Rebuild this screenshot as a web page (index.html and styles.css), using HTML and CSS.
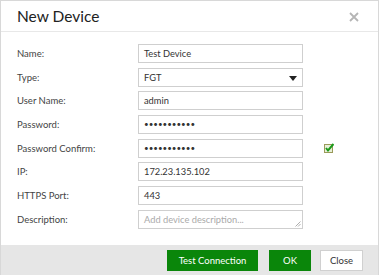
FILE: index.html
```html
<!DOCTYPE html>
<html>
<head>
<meta charset="utf-8">
<link rel="stylesheet" href="styles.css">
</head>
<body>
<div class="dialog">
  <div class="dialog-header">
    <span class="title">New Device</span>
    <svg class="close-x" width="10" height="10" viewBox="0 0 10 10">
      <path d="M1 1 L9 9 M9 1 L1 9" stroke="#b5b5b5" stroke-width="1.8"/>
    </svg>
  </div>
  <form class="dialog-body">
    <div class="form-group">
      <label>Name:</label>
      <div class="field">Test Device</div>
    </div>
    <div class="form-group">
      <label>Type:</label>
      <div class="field select">FGT<span class="caret"></span></div>
    </div>
    <div class="form-group">
      <label>User Name:</label>
      <div class="field">admin</div>
    </div>
    <div class="form-group">
      <label>Password:</label>
      <div class="field dots">&bull;&bull;&bull;&bull;&bull;&bull;&bull;&bull;&bull;&bull;&bull;</div>
    </div>
    <div class="form-group">
      <label>Password Confirm:</label>
      <div class="field dots">&bull;&bull;&bull;&bull;&bull;&bull;&bull;&bull;&bull;&bull;&bull;</div>
      <svg class="check" width="10" height="10" viewBox="0 0 10 10">
        <rect x="0.5" y="1.5" width="8" height="8" fill="#e8f0d8" stroke="#9a9a5a"/>
        <path d="M2 5 L4 7.5 L9.5 1" fill="none" stroke="#1a9a1a" stroke-width="2"/>
      </svg>
    </div>
    <div class="form-group">
      <label>IP:</label>
      <div class="field">172.23.135.102</div>
    </div>
    <div class="form-group">
      <label>HTTPS Port:</label>
      <div class="field">443</div>
    </div>
    <div class="form-group">
      <label>Description:</label>
      <div class="field textarea">Add device description...
        <svg class="grip" width="6" height="6" viewBox="0 0 6 6">
          <path d="M5.5 0.5 L0.5 5.5 M5.5 3 L3 5.5" stroke="#999" stroke-width="0.8"/>
        </svg>
      </div>
    </div>
  </form>
  <div class="dialog-footer">
    <button class="btn green wide">Test Connection</button>
    <button class="btn green ok">OK</button>
    <button class="btn plain">Close</button>
  </div>
</div>
</body>
</html>
```
FILE: styles.css
```css
html, body { margin: 0; padding: 0; background-color: white; font-family: Lato, "Liberation Sans", sans-serif; color: #333; }
.dialog { width: 377px; height: 274px; border: 1px solid #d8d8d8; border-bottom: none; display: flex; flex-direction: column; background: white; }
.dialog-header { height: 30px; border-bottom: 1px solid #e8e8e8; display: flex; align-items: center; justify-content: space-between; padding: 0 16px; }
.title { font-size: 15.5px; color: #222; }
.close-x { margin-right: 3px; margin-top: 1px; }
.dialog-body { flex: 1; padding: 12px 0 0 16px; }
.form-group { display: flex; align-items: center; height: 19px; margin-bottom: 4.7px; }
label { width: 121px; font-size: 9.5px; color: #444; }
.field { width: 153px; height: 17px; border: 1px solid #cfcfcf; padding: 0 5px; font-size: 9.3px; line-height: 17px; color: #333; position: relative; }
.dots { font-size: 8px; }
.select .caret { position: absolute; right: 5px; top: 7px; border-left: 4px solid transparent; border-right: 4px solid transparent; border-top: 5px solid #222; }
.textarea { color: #aaa; }
.grip { position: absolute; right: 1px; bottom: 1px; }
.check { margin-left: 21px; }
.dialog-footer { height: 30px; background: #e6e6e6; display: flex; align-items: center; justify-content: flex-end; padding-right: 15px; }
.btn { height: 21px; font-family: Lato, "Liberation Sans", sans-serif; font-size: 9.5px; border: 1px solid transparent; padding: 0; margin-left: 9px; }
.green { background: #0a860a; color: white; width: 42px; }
.green.wide { width: 91px; }
.ok { margin-left: 11px; }
.plain { background: white; color: #333; border-color: #d0d0d0; width: 43px; }
```
